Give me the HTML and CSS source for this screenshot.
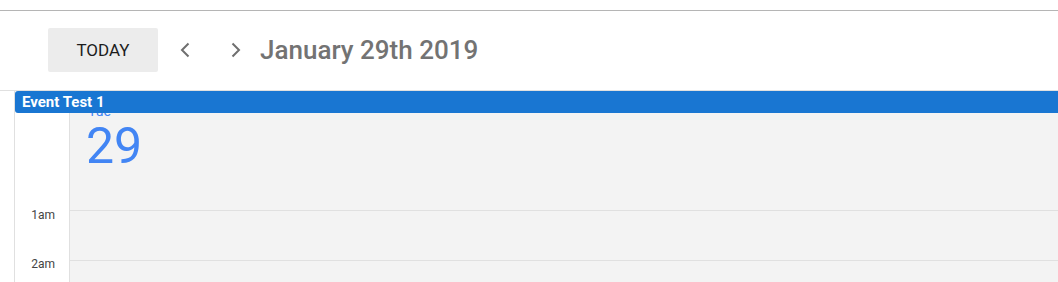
FILE: index.html
```html
<!DOCTYPE html>
<html>
<head>
<meta charset="utf-8">
<link rel="stylesheet" href="styles.css">
</head>
<body>
<div class="topbar"></div>
<div class="toolbar">
  <button class="today">TODAY</button>
  <span class="nav nav-prev"><svg viewBox="0 0 22 22" width="22" height="22"><polyline points="14.5,4.5 8,11 14.5,17.5" fill="none" stroke="#6f6f6f" stroke-width="2"/></svg></span>
  <span class="nav nav-next"><svg viewBox="0 0 22 22" width="22" height="22"><polyline points="7.5,4.5 14,11 7.5,17.5" fill="none" stroke="#6f6f6f" stroke-width="2"/></svg></span>
  <div class="title">January 29th 2019</div>
</div>
<div class="calendar">
  <div class="gutter-head"></div>
  <div class="day-head">
    <div class="weekday">Tue</div>
    <div class="daynum">29</div>
  </div>
  <div class="gutter-body">
    <div class="interval-label"><span>1am</span></div>
    <div class="interval-label"><span>2am</span></div>
  </div>
  <div class="day-body">
    <div class="interval"></div>
    <div class="interval"></div>
  </div>
  <div class="event">Event Test 1</div>
</div>
</body>
</html>
```
FILE: styles.css
```css
html, body {
  margin: 0;
  padding: 0;
  background: #fff;
  font-family: Roboto, "Liberation Sans", sans-serif;
  overflow: hidden;
  height: 282px;
}
.topbar {
  height: 10px;
  border-bottom: 1px solid #b5b5b5;
}
.toolbar {
  height: 79px;
  display: flex;
  align-items: center;
  padding-left: 48px;
  border-bottom: 1px solid #e0e0e0;
}
.today {
  width: 110px;
  height: 44px;
  border: none;
  border-radius: 2px;
  background: #ececec;
  color: #1c1c1c;
  font-family: Roboto, "Liberation Sans", sans-serif;
  font-size: 17px;
  font-weight: 400;
  padding: 0;
  margin-right: 16px;
  margin-top: -1px;
}
.nav {
  display: flex;
  width: 22px;
  height: 22px;
  margin-top: -2px;
}
.nav-prev { margin-right: 29px; }
.nav-next { margin-right: 13px; }
.title {
  font-size: 26px;
  font-weight: 500;
  color: #737373;
  margin-top: -1px;
}
.calendar {
  position: relative;
  margin-left: 14px;
  border-left: 1px solid #e0e0e0;
  display: grid;
  grid-template-columns: 54px 1fr;
  grid-template-rows: 119px auto;
  height: 200px;
}
.gutter-head { background: #fff; }
.day-head {
  background: #f3f3f3;
  border-left: 1px solid #e0e0e0;
  padding-top: 13px;
  padding-left: 16px;
  color: #4285f4;
}
.weekday {
  font-size: 14px;
  line-height: 14px;
  padding-left: 2px;
}
.daynum {
  font-size: 50px;
  line-height: 50px;
  margin-top: 3px;
}
.gutter-body {
  overflow: hidden;
}
.interval-label {
  height: 50px;
  text-align: right;
  padding-right: 14px;
}
.interval-label span {
  display: block;
  font-size: 12px;
  line-height: 12px;
  margin-top: -1px;
  color: #444;
}
.day-body {
  background: #f3f3f3;
  border-left: 1px solid #e0e0e0;
}
.interval {
  height: 50px;
  box-sizing: border-box;
  border-top: 1px solid #e0e0e0;
}
.event {
  position: absolute;
  top: 0;
  left: 0;
  right: 0;
  height: 22px;
  line-height: 22px;
  background: #1976d2;
  color: #fff;
  font-size: 15px;
  font-weight: 700;
  padding-left: 7px;
  border-radius: 3px 0 0 3px;
}
```
